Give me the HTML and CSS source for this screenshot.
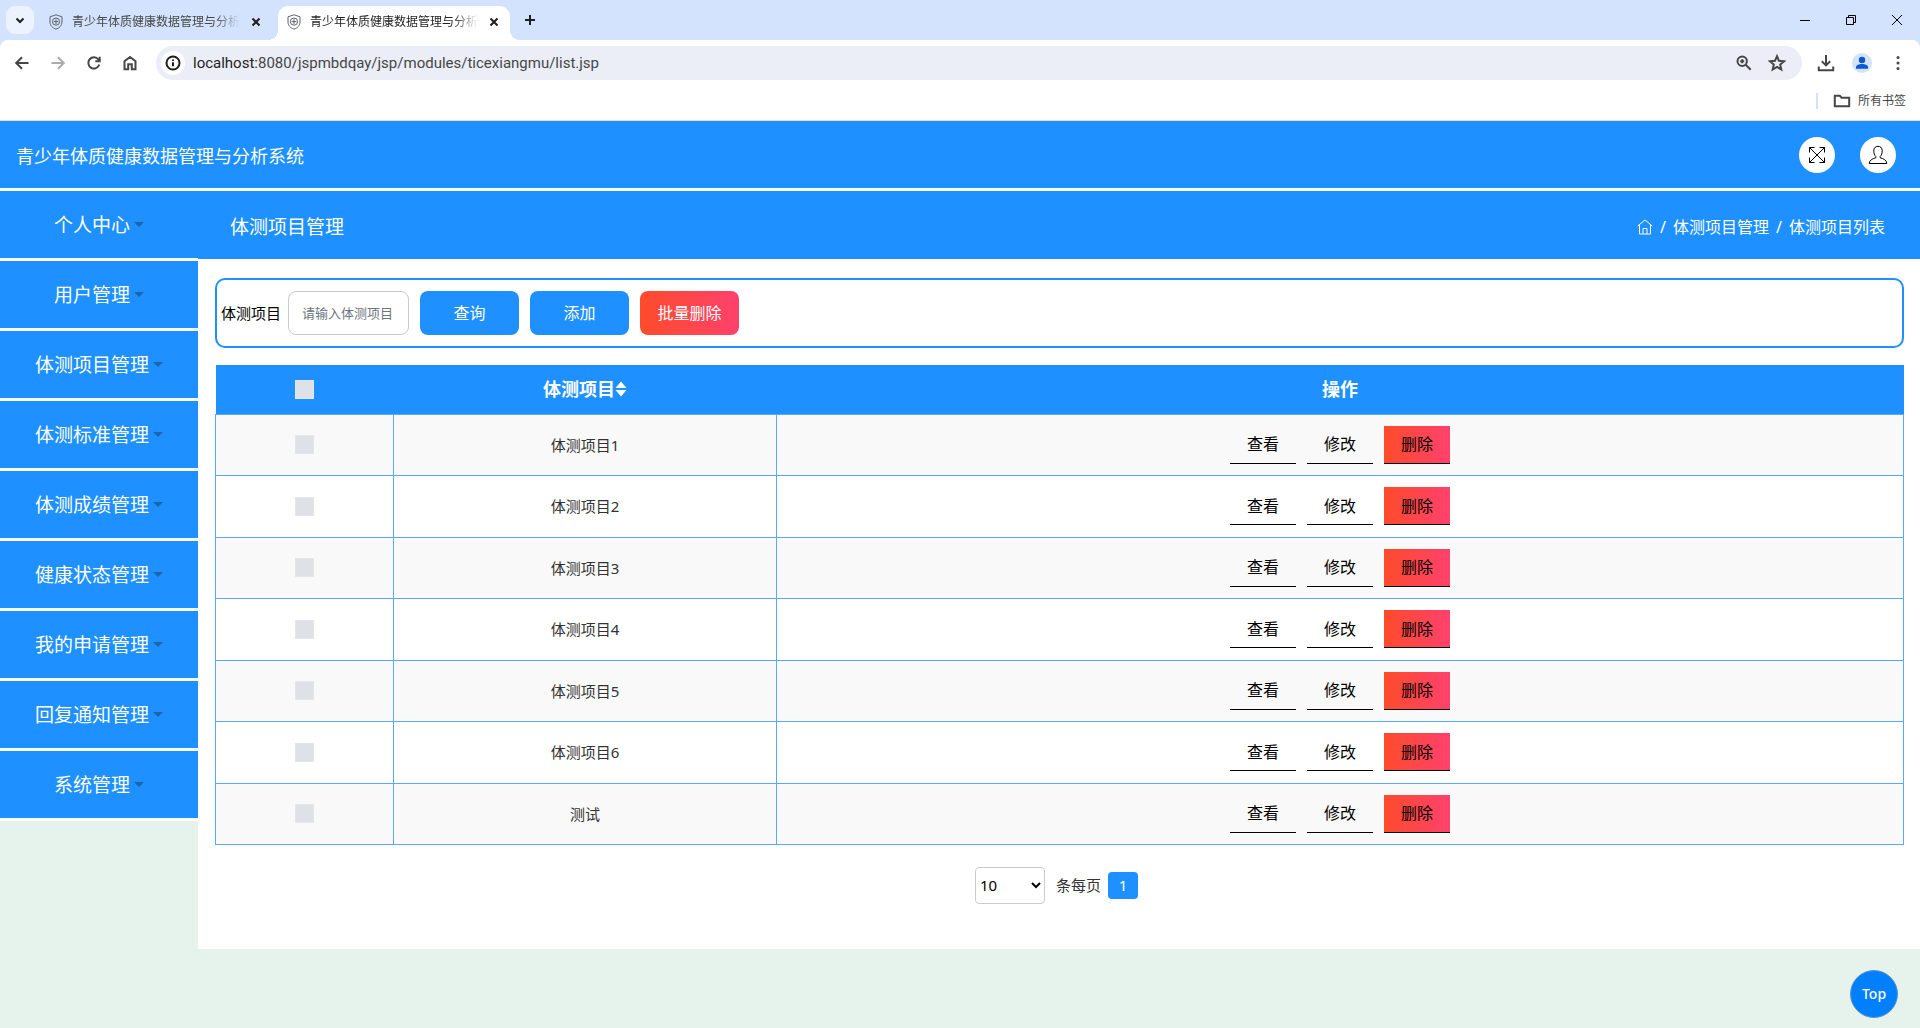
FILE: index.html
```html
<!DOCTYPE html>
<html lang="zh-CN">
<head>
<meta charset="utf-8">
<title>青少年体质健康数据管理与分析系统</title>
<link rel="stylesheet" href="styles.css">
</head>
<body>
<svg class="defs" aria-hidden="true">
  <symbol id="shield" viewBox="0 0 16 16"><path d="M8 .8 14 2.800V8c0 3.600-2.500 5.900-6 7.200C4.500 13.900 2 11.600 2 8V2.800z"/><circle cx="8" cy="7.600" r="3.600"/><path d="M8 5.200v4.800M5.600 7.600h4.800"/></symbol>
  <symbol id="x" viewBox="0 0 10 10"><path d="m1.500 1.500 7 7m0-7-7 7"/></symbol>
</svg>
<div class="browser">
  <div class="tabstrip">
    <button class="tab-search" aria-label="搜索标签页"><svg width="10" height="10" viewBox="0 0 10 10"><path d="m1.500 3.500 3.500 3.500 3.500-3.500"/></svg></button>
    <div class="tab"><svg class="fav" width="16" height="16"><use href="#shield"/></svg><span class="tab-title">青少年体质健康数据管理与分析系统</span><button class="tab-close" aria-label="关闭"><svg width="10" height="10"><use href="#x"/></svg></button></div>
    <div class="tab active"><svg class="fav" width="16" height="16"><use href="#shield"/></svg><span class="tab-title">青少年体质健康数据管理与分析系统</span><button class="tab-close" aria-label="关闭"><svg width="10" height="10"><use href="#x"/></svg></button></div>
    <button class="new-tab" aria-label="新标签页"><svg width="12" height="12" viewBox="0 0 12 12"><path d="M6 1v10M1 6h10"/></svg></button>
    <div class="window-buttons">
      <button aria-label="最小化"><svg width="10" height="10" viewBox="0 0 10 10"><path d="M0 5.500h10"/></svg></button>
      <button aria-label="还原"><svg width="10" height="10" viewBox="0 0 10 10"><path d="M.5 2.500h7v7h-7zM2.500 2.500v-2h7v7h-2"/></svg></button>
      <button aria-label="关闭窗口"><svg width="10" height="10" viewBox="0 0 10 10"><path d="m0 0 10 10M10 0 0 10"/></svg></button>
    </div>
  </div>
  <div class="toolbar">
    <button aria-label="后退"><svg width="16" height="16" viewBox="0 0 16 16"><path d="M14.500 8H2.500M8 2.200 2.200 8 8 13.800"/></svg></button>
    <button class="disabled" aria-label="前进"><svg width="16" height="16" viewBox="0 0 16 16"><path d="M1.500 8h12M8 2.200 13.800 8 8 13.800"/></svg></button>
    <button aria-label="刷新"><svg width="16" height="16" viewBox="0 0 16 16"><path d="M13.300 9.500A5.600 5.600 0 1 1 12.400 4.500L13.500 6M13.700 1.800v4.400H9.300"/></svg></button>
    <button aria-label="主页"><svg width="16" height="16" viewBox="0 0 16 16"><path d="M2.500 14.200V6.300L8 2l5.500 4.300v7.900H9.800V9.300H6.200v4.900z"/></svg></button>
    <div class="omnibox">
      <span class="site-info"><svg width="16" height="16" viewBox="0 0 16 16"><circle cx="8" cy="8" r="6.500"/><path d="M8 7.200v4M8 4.400v1.600"/></svg></span>
      <div class="url"><span>localhost:</span>8080/jspmbdqay/jsp/modules/ticexiangmu/list.jsp</div>
      <svg width="16" height="16" viewBox="0 0 16 16"><circle cx="6.200" cy="6.200" r="4.700"/><path d="m9.700 9.700 5 5M6.200 4.200v4M4.200 6.200h4"/></svg>
      <svg width="18" height="18" viewBox="0 0 18 18"><path d="m9 2.200 2 4.600 5 .5-3.800 3.300 1.100 4.900L9 12.900l-4.300 2.600 1.100-4.900L2 7.300l5-.5z"/></svg>
    </div>
    <button aria-label="下载"><svg width="18" height="18" viewBox="0 0 18 18"><path d="M9 1v10M4.800 7.200 9 11.400l4.200-4.200M1.800 12.500v3.700h14.400v-3.700"/></svg></button>
    <button class="avatar" aria-label="个人资料"><svg width="20" height="20" viewBox="0 0 20 20"><circle cx="10" cy="7" r="3.200"/><path d="M4 15.700v-1.500c0-2 3-3.200 6-3.200s6 1.200 6 3.200v1.500z"/></svg></button>
    <button aria-label="菜单"><svg class="dots" width="16" height="16" viewBox="0 0 16 16"><circle cx="8" cy="2.500" r="1.500"/><circle cx="8" cy="8" r="1.500"/><circle cx="8" cy="13.500" r="1.500"/></svg></button>
  </div>
  <div class="bookmarks"><a href="#"><svg width="18" height="14" viewBox="0 0 18 14"><path d="M1.800 12.200V1.800h5l1.800 1.900h7.600v8.500z"/></svg>所有书签</a></div>
</div>

<header class="header">
  <h1>青少年体质健康数据管理与分析系统</h1>
  <div class="header-buttons">
    <button aria-label="全屏"><svg width="18" height="18" viewBox="0 0 18 18"><path d="m1.500 1.500 15 15m0-15-15 15M1.500 6.500v-5h5M11.500 1.500h5v5M16.500 11.500v5h-5M6.500 16.500h-5v-5"/></svg></button>
    <button aria-label="用户"><svg width="20" height="20" viewBox="0 0 20 20"><path d="M7.800 11.500C6.300 10.300 5.800 8.200 5.800 5.700 5.800 2.900 7.500 1.300 10 1.300s4.200 1.600 4.200 4.400c0 2.500-.5 4.600-2 5.800v1.300c3.500.9 6.300 2.300 6.600 5.700H1.200c.3-3.400 3.100-4.800 6.600-5.700z"/></svg></button>
  </div>
</header>

<div class="layout">
  <nav class="sidebar">
    <a href="#">个人中心</a>
    <a href="#">用户管理</a>
    <a href="#">体测项目管理</a>
    <a href="#">体测标准管理</a>
    <a href="#">体测成绩管理</a>
    <a href="#">健康状态管理</a>
    <a href="#">我的申请管理</a>
    <a href="#">回复通知管理</a>
    <a href="#">系统管理</a>
  </nav>
  <main class="main">
    <div class="titlebar">
      <h2>体测项目管理</h2>
      <div class="crumbs"><a href="#" aria-label="首页"><svg width="16" height="16" viewBox="0 0 16 16"><path d="M.7 7 8 1l7.300 6M2.500 5.800V15h11V5.800M6 15V9.500h4V15"/></svg></a><span>/</span><a href="#">体测项目管理</a><span>/</span><a href="#">体测项目列表</a></div>
    </div>
    <div class="content">
      <form class="search">
        <label for="name">体测项目</label>
        <input id="name" type="text" placeholder="请输入体测项目">
        <div class="search-buttons">
          <button type="button">查询</button>
          <button type="button">添加</button>
          <button type="button" class="danger">批量删除</button>
        </div>
      </form>
      <table class="list">
        <colgroup><col class="col-check"><col class="col-name"><col></colgroup>
        <thead><tr><th><input type="checkbox" aria-label="全选"></th><th><span class="sortable">体测项目<svg width="12" height="16" viewBox="0 0 12 16"><path d="M.5 7 6 .5 11.500 7zM.5 9 6 15.500 11.500 9z"/></svg></span></th><th>操作</th></tr></thead>
        <tbody>
          <tr><td><input type="checkbox" aria-label="选择"></td><td>体测项目1</td><td><div class="actions"><button>查看</button><button>修改</button><button class="danger">删除</button></div></td></tr>
          <tr><td><input type="checkbox" aria-label="选择"></td><td>体测项目2</td><td><div class="actions"><button>查看</button><button>修改</button><button class="danger">删除</button></div></td></tr>
          <tr><td><input type="checkbox" aria-label="选择"></td><td>体测项目3</td><td><div class="actions"><button>查看</button><button>修改</button><button class="danger">删除</button></div></td></tr>
          <tr><td><input type="checkbox" aria-label="选择"></td><td>体测项目4</td><td><div class="actions"><button>查看</button><button>修改</button><button class="danger">删除</button></div></td></tr>
          <tr><td><input type="checkbox" aria-label="选择"></td><td>体测项目5</td><td><div class="actions"><button>查看</button><button>修改</button><button class="danger">删除</button></div></td></tr>
          <tr><td><input type="checkbox" aria-label="选择"></td><td>体测项目6</td><td><div class="actions"><button>查看</button><button>修改</button><button class="danger">删除</button></div></td></tr>
          <tr><td><input type="checkbox" aria-label="选择"></td><td>测试</td><td><div class="actions"><button>查看</button><button>修改</button><button class="danger">删除</button></div></td></tr>
        </tbody>
      </table>
      <div class="pager">
        <select id="size"><option>10</option><option>25</option><option>50</option></select>
        <label for="size">条每页</label>
        <button>1</button>
      </div>
    </div>
  </main>
</div>
<button class="to-top">Top</button>
</body>
</html>
```
FILE: styles.css
```css
* { box-sizing: border-box; }
body {
  margin: 0;
  background: #e6f3ec;
  color: #333;
  font: 400 15px/20px "Noto Sans", "Noto Sans CJK SC", sans-serif;
}
button, input, select { font: inherit; color: inherit; margin: 0; }
button { padding: 0; border: 0; background: none; display: flex; align-items: center; justify-content: center; }
a { color: inherit; text-decoration: none; }
h1, h2 { margin: 0; font-weight: inherit; }
svg { display: block; flex: none; fill: none; stroke: currentColor; }
.defs { display: none; }

/* browser frame */
.browser { background: #d3e3fd; color: #454746; border-bottom: 1px solid #dcdfe4; }
.tabstrip { display: flex; align-items: flex-end; height: 40px; padding-left: 6px; color: #1f1f1f; }
.tab-search { width: 28px; height: 28px; margin-bottom: 6px; border-radius: 9px; background: #ecf3fe; }
.tab-search svg { stroke-width: 2; }
.tab { display: flex; align-items: center; width: 232px; height: 34px; padding: 0 8px 2px; gap: 8px; margin-left: 6px; }
.tab.active { position: relative; background: #fff; border-radius: 10px 10px 0 0; }
.tab.active::before, .tab.active::after { content: ""; position: absolute; bottom: 0; width: 10px; height: 10px; }
.tab.active::before { right: 100%; background: radial-gradient(circle at 0 0, transparent 10px, #fff 10px); }
.tab.active::after { left: 100%; background: radial-gradient(circle at 100% 0, transparent 10px, #fff 10px); }
.tab .fav { stroke: #5f6368; }
.tab-title { flex: 1; overflow: hidden; white-space: nowrap; font-size: 12px; color: #474747; -webkit-mask-image: linear-gradient(to right, #000 85%, transparent); mask-image: linear-gradient(to right, #000 85%, transparent); }
.active .tab-title { color: #1f1f1f; }
.tab-close { width: 16px; height: 16px; }
.tab-close svg { stroke-width: 2; }
.new-tab { width: 28px; height: 28px; margin: 0 0 6px 6px; }
.new-tab svg { stroke-width: 2; }
.window-buttons { display: flex; align-self: center; margin-left: auto; }
.window-buttons button { width: 46px; height: 40px; color: #000; }
.toolbar { display: flex; align-items: center; height: 46px; padding: 0 8px; background: #fff; border-radius: 8px 8px 0 0; }
.toolbar > button { width: 28px; height: 28px; margin-right: 8px; }
.toolbar svg { stroke-width: 2; }
.toolbar .disabled { color: #a9abac; }
.omnibox { flex: 1; display: flex; align-items: center; gap: 16px; height: 34px; margin: 0 10px 0 4px; padding: 0 16px 0 5px; border-radius: 17px; background: #ebeef7; }
.omnibox svg { stroke-width: 2; }
.site-info { display: grid; place-items: center; width: 24px; height: 24px; border-radius: 50%; background: #fff; color: #1f1f1f; }
.url { flex: 1; margin-left: -8px; font-family: Roboto, sans-serif; font-size: 15px; }
.url span { color: #1f1f1f; }
.toolbar .avatar { width: 20px; height: 20px; margin: 0 12px 0 4px; border-radius: 50%; background: #d3e3fd; color: #0b57d0; }
.avatar svg, .dots { fill: currentColor; stroke: none; }
.toolbar > button:last-child { margin-right: 0; }
.bookmarks { display: flex; justify-content: flex-end; align-items: center; height: 34px; padding: 0 14px 5px 0; background: #fff; font-size: 12px; }
.bookmarks a { display: flex; align-items: center; gap: 7px; height: 16px; padding-left: 15px; border-left: 2px solid #d3e3fd; }
.bookmarks svg { stroke-width: 2; }

/* site header */
.header { display: flex; align-items: center; justify-content: space-between; height: 70px; padding: 0 24px 0 16px; background: #1e90ff; border-bottom: 3px solid #fff; color: #fff; }
.header h1 { font-size: 18px; line-height: 24px; padding-top: 2px; }
.header-buttons { display: flex; gap: 25px; }
.header-buttons button { width: 36px; height: 36px; border-radius: 50%; background: #fff; color: #000; }

.layout { display: flex; align-items: flex-start; }
.sidebar { flex: none; width: 198px; }
.sidebar a { display: flex; align-items: center; justify-content: center; gap: 4px; height: 70px; background: #1e90ff; border-bottom: 3px solid #fff; color: #fff; font-size: 19px; }
.sidebar a::after { content: ""; border: 5px solid transparent; border-top-color: #1a66ae; border-bottom: 0; }
.main { flex: 1; min-width: 0; background: #fff; }
.titlebar { display: flex; align-items: center; justify-content: space-between; height: 68px; padding: 4px 35px 0 32px; background: #1e90ff; color: #fff; }
.titlebar h2 { font-size: 19px; }
.crumbs { display: flex; align-items: center; gap: 7px; font-size: 16px; }
.content { padding: 19px 16px 45px 17px; }

.search { display: flex; align-items: center; height: 70px; padding: 0 4px; border: 2px solid #1e90ff; border-radius: 10px; color: #000; }
.search > input { width: 121px; height: 44px; margin: 0 11px 0 7px; padding: 0 13px; border: 1px solid #ccc; border-radius: 8px; background: #fff; font-size: 13px; }
.search > input::placeholder { color: #6c757d; }
.search-buttons { display: flex; gap: 11px; }
.search-buttons button { width: 99px; height: 44px; border-radius: 8px; background: #1e90ff; color: #fff; font-size: 16px; }
.search-buttons .danger, .actions .danger { background: linear-gradient(to right, #ff4b2b, #ff416c); }

.list { width: 100%; margin-top: 17px; border-collapse: collapse; table-layout: fixed; text-align: center; }
.col-check { width: 178px; }
.col-name { width: 383px; }
.list th, .list td { padding: 0; }
.list th { height: 49px; background: #1e90ff; color: #fff; font-size: 18px; font-weight: 700; }
.list td { height: 61px; border: 1px solid #56abff; }
.list tbody tr:nth-child(even) td { height: 62px; }
.list tbody tr:nth-child(odd) { background: #f9f9f9; }
.list input { appearance: none; display: block; width: 19px; height: 19px; margin: 0 auto; border: 1px solid #e4e7ea; background: #dee2e6; }
.sortable { display: inline-flex; align-items: center; }
.sortable svg { fill: currentColor; stroke: none; }
.actions { display: flex; justify-content: center; gap: 11px; }
.actions button { width: 66px; height: 38px; border-bottom: 1px solid #000; color: #000; font-size: 16px; }

.pager { display: flex; align-items: center; justify-content: center; margin: 22px 6px 0 0; }
.pager select { width: 70px; height: 37px; padding: 0; border: 1px solid #ccc; border-radius: 4px; background: #fff; color: #000; }
.pager label { margin: 0 7px 0 11px; }
.pager button { width: 30px; height: 27px; border-radius: 4px; background: #1e90ff; color: #fff; }

.to-top { position: fixed; right: 22px; bottom: 10px; width: 48px; height: 48px; border: 1px solid #5c93c9; border-radius: 50%; background: #0080ff; color: #fff; font: 500 14px/20px "Noto Sans", sans-serif; }
```
